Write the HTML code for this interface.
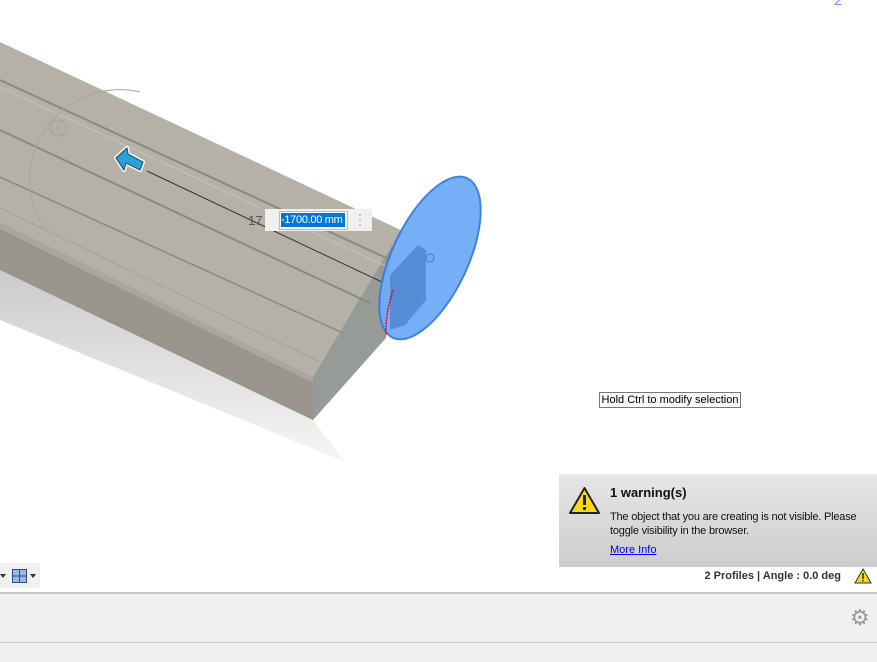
<!DOCTYPE html>
<html><head><style>
body{margin:0;width:877px;height:662px;overflow:hidden;background:#fff;font-family:"Liberation Sans",sans-serif;position:relative}
.abs{position:absolute}
</style></head><body>
<svg class="abs" style="left:0;top:0" width="877" height="600">
<defs>
<linearGradient id="sh" x1="0" y1="0" x2="0" y2="1"><stop offset="0" stop-color="#cacaca"/><stop offset="1" stop-color="#f6f6f6"/></linearGradient>
</defs>
<polygon points="0,268 313,420 345,462 0,320" fill="url(#sh)"/>
<polygon points="0,42 405,232 313,377 0,222" fill="#b5b1a6"/>
<polygon points="0,222 313,377 313,420 0,270" fill="#9a958c"/>
<polygon points="0,222 313,377 313,383 0,229" fill="#aaa69c"/>
<polygon points="313,377 392,245 386,338 313,420" fill="#979b97"/>
<line x1="0" y1="80" x2="395" y2="262" stroke="#8c897f" stroke-width="2"/>
<line x1="0" y1="87" x2="390" y2="268" stroke="#c5c1b6" stroke-width="1"/>
<line x1="0" y1="130" x2="370" y2="303" stroke="#8c897f" stroke-width="2"/>
<line x1="0" y1="177" x2="343" y2="333" stroke="#8c897f" stroke-width="1.5"/>
<line x1="0" y1="208" x2="320" y2="362" stroke="#a5a197" stroke-width="1"/>
<path d="M45,230 A90,90 0 0 1 140,92" fill="none" stroke="#a9a59c" stroke-width="1"/>
<circle cx="58" cy="128" r="8" fill="none" stroke="#a9a59c" stroke-width="1.5"/>
<circle cx="58" cy="128" r="2" fill="none" stroke="#a9a59c"/>
<line x1="147" y1="171" x2="403" y2="292" stroke="#333" stroke-width="1"/>
<ellipse cx="430" cy="258" rx="38" ry="88" transform="rotate(25 430 258)" fill="#6eabf7" stroke="#3b7bd9" stroke-width="2" opacity="0.95"/>
<polygon points="390,275 418,245 426,250 426,300 405,325 390,330" fill="#4f82cc" opacity="0.8"/>
<path d="M393,290 A40,90 25 0 0 386,335" fill="none" stroke="#e00" stroke-width="1.5" stroke-dasharray="2,1"/>
<circle cx="430" cy="258" r="4" fill="none" stroke="#3b7bd9"/>
<path d="M116,158 L127,148 L128,154 L143,162 L140,170 L126,163 L124,170 Z" fill="#2da0d6" stroke="#fff" stroke-width="4" stroke-linejoin="round"/>
<path d="M116,158 L127,148 L128,154 L143,162 L140,170 L126,163 L124,170 Z" fill="#2da0d6" stroke="#1a5a7a" stroke-width="1.2" stroke-linejoin="round"/>
<text x="248" y="225" font-size="13" fill="#555">17</text>
</svg>
<div class="abs" style="left:265px;top:209px;width:107px;height:22px;background:#f0f0f0"></div>
<div class="abs" style="left:279px;top:211px;width:67px;height:17px;background:#fff;border:1px solid #bbb"></div>
<div class="abs" style="left:281px;top:213px;width:64px;height:14px;background:#0078d7;color:#fff;font-size:11px;line-height:14px;white-space:nowrap;overflow:hidden;letter-spacing:-0.3px">-1700.00 mm</div>
<div class="abs" style="left:358px;top:212px;color:#777;font-size:12px;line-height:5px;width:6px">·<br>·<br>·</div>
<div class="abs" style="left:599px;top:392px;width:140px;height:14px;border:1px solid #777;background:#f8f8f8;font-size:11px;line-height:14px;text-align:center;color:#000;white-space:nowrap">Hold Ctrl to modify selection</div>
<div class="abs" style="left:559px;top:474px;width:318px;height:93px;background:linear-gradient(#e6e6e6,#cdcdcd)">
<svg class="abs" style="left:9px;top:12px" width="33" height="30"><path d="M16.5,2 L31,27 L2,27 Z" fill="#f9d71c" stroke="#222" stroke-width="2" stroke-linejoin="round"/><rect x="15" y="9" width="3" height="10" fill="#222"/><rect x="15" y="21" width="3" height="3" fill="#222"/></svg>
<div class="abs" style="left:51px;top:11px;font-weight:bold;font-size:13px;color:#111">1 warning(s)</div>
<div class="abs" style="left:51px;top:36px;font-size:11px;line-height:14px;color:#111;width:265px;letter-spacing:-0.2px">The object that you are creating is not visible. Please toggle visibility in the browser.</div>
<div class="abs" style="left:51px;top:70px;font-size:11px;color:#00e;text-decoration:underline">More Info</div>
</div>
<div class="abs" style="left:600px;top:570px;width:241px;text-align:right;font-size:11px;font-weight:bold;color:#333">2 Profiles | Angle : 0.0 deg</div>
<svg class="abs" style="left:854px;top:568px" width="18" height="16"><path d="M9,1 L17,15 L1,15 Z" fill="#f9d71c" stroke="#333" stroke-width="1"/><rect x="8.3" y="5" width="1.4" height="6" fill="#222"/><rect x="8.3" y="12" width="1.4" height="1.4" fill="#222"/></svg>
<div class="abs" style="left:0;top:563px;width:40px;height:25px;background:#f0f0f0"></div>
<div class="abs" style="left:0;top:574px;border-left:3px solid transparent;border-right:3px solid transparent;border-top:4px solid #333;width:0"></div>
<svg class="abs" style="left:12px;top:569px" width="16" height="15"><rect x="0.5" y="0.5" width="14" height="13" fill="#9ab8e0" stroke="#2c4e8a"/><line x1="7.5" y1="0" x2="7.5" y2="14" stroke="#2c4e8a"/><line x1="0" y1="7" x2="15" y2="7" stroke="#2c4e8a"/></svg>
<div class="abs" style="left:30px;top:574px;border-left:3px solid transparent;border-right:3px solid transparent;border-top:4px solid #333;width:0"></div>
<div class="abs" style="left:0;top:592px;width:877px;height:2px;background:#c8c8c8"></div>
<div class="abs" style="left:0;top:594px;width:877px;height:68px;background:#f0f0f0"></div>
<div class="abs" style="left:0;top:642px;width:877px;height:1px;background:#c8c8c8"></div>
<div class="abs" style="left:850px;top:605px;font-size:22px;color:#999">⚙</div>
<div class="abs" style="left:834px;top:-8px;font-size:14px;color:#8080ff">2</div>
</body></html>
